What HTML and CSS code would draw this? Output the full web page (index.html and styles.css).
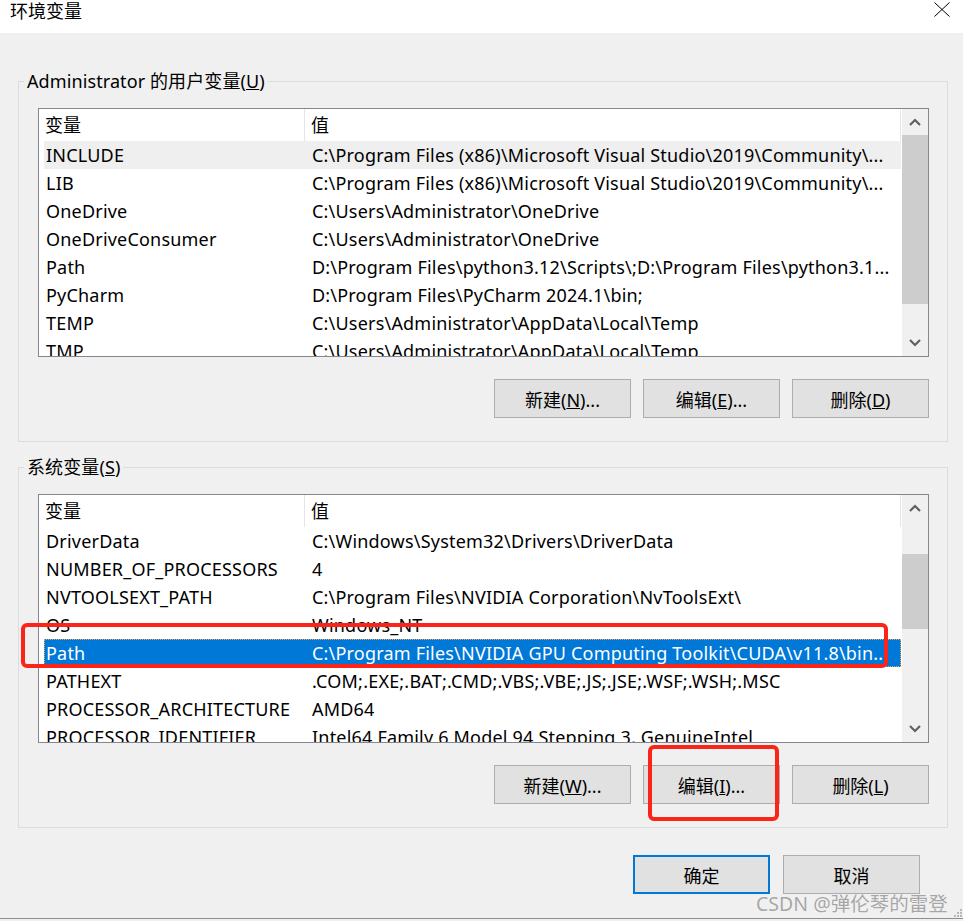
FILE: index.html
```html
<!DOCTYPE html>
<html lang="zh-CN">

<head>
    <meta charset="UTF-8">
    <meta name="viewport" content="width=device-width, initial-scale=1.0">
    <title>环境变量</title>
    <link rel="stylesheet" href="styles.css">
</head>

<body>
    <div class="window">
        <!-- 标题栏 -->
        <div class="title_bar">
            <span class="title_text">环境变量</span>
            <svg class="close_icon" width="16" height="15" viewBox="0 0 16 15">
                <path d="M0.5 0.5 L15.5 14.5 M15.5 0.5 L0.5 14.5" stroke="#000" stroke-width="1" fill="none" />
            </svg>
        </div>

        <div class="dialog_body">
            <!-- 用户变量 -->
            <div class="group">
                <div class="group_label">Administrator 的用户变量(<u>U</u>)</div>
                <div class="list_box">
                    <div class="list_main">
                        <div class="list_head">
                            <div class="head_name">变量</div>
                            <div class="head_value">值</div>
                        </div>
                        <div class="list_row hover">
                            <div class="col_name">INCLUDE</div>
                            <div class="col_value">C:\Program Files (x86)\Microsoft Visual Studio\2019\Community\...</div>
                        </div>
                        <div class="list_row">
                            <div class="col_name">LIB</div>
                            <div class="col_value">C:\Program Files (x86)\Microsoft Visual Studio\2019\Community\...</div>
                        </div>
                        <div class="list_row">
                            <div class="col_name">OneDrive</div>
                            <div class="col_value">C:\Users\Administrator\OneDrive</div>
                        </div>
                        <div class="list_row">
                            <div class="col_name">OneDriveConsumer</div>
                            <div class="col_value">C:\Users\Administrator\OneDrive</div>
                        </div>
                        <div class="list_row">
                            <div class="col_name">Path</div>
                            <div class="col_value">D:\Program Files\python3.12\Scripts\;D:\Program Files\python3.1...</div>
                        </div>
                        <div class="list_row">
                            <div class="col_name">PyCharm</div>
                            <div class="col_value">D:\Program Files\PyCharm 2024.1\bin;</div>
                        </div>
                        <div class="list_row">
                            <div class="col_name">TEMP</div>
                            <div class="col_value">C:\Users\Administrator\AppData\Local\Temp</div>
                        </div>
                        <div class="list_row">
                            <div class="col_name">TMP</div>
                            <div class="col_value">C:\Users\Administrator\AppData\Local\Temp</div>
                        </div>
                    </div>
                    <div class="scroll_bar">
                        <div class="scroll_btn">
                            <svg width="12" height="8" viewBox="0 0 12 8"><path d="M1 7 L6 2 L11 7" stroke="#606060" stroke-width="2.2" fill="none" /></svg>
                        </div>
                        <div class="scroll_track">
                            <div class="scroll_thumb" style="margin-top: 0; height: 169px;"></div>
                        </div>
                        <div class="scroll_btn">
                            <svg width="12" height="8" viewBox="0 0 12 8"><path d="M1 1 L6 6 L11 1" stroke="#606060" stroke-width="2.2" fill="none" /></svg>
                        </div>
                    </div>
                </div>
                <div class="btn_row">
                    <button class="win_btn">新建(<u>N</u>)...</button>
                    <button class="win_btn">编辑(<u>E</u>)...</button>
                    <button class="win_btn">删除(<u>D</u>)</button>
                </div>
            </div>

            <!-- 系统变量 -->
            <div class="group group_sys">
                <div class="group_label">系统变量(<u>S</u>)</div>
                <div class="list_box">
                    <div class="list_main">
                        <div class="list_head">
                            <div class="head_name">变量</div>
                            <div class="head_value">值</div>
                        </div>
                        <div class="list_row">
                            <div class="col_name">DriverData</div>
                            <div class="col_value">C:\Windows\System32\Drivers\DriverData</div>
                        </div>
                        <div class="list_row">
                            <div class="col_name">NUMBER_OF_PROCESSORS</div>
                            <div class="col_value">4</div>
                        </div>
                        <div class="list_row">
                            <div class="col_name">NVTOOLSEXT_PATH</div>
                            <div class="col_value">C:\Program Files\NVIDIA Corporation\NvToolsExt\</div>
                        </div>
                        <div class="list_row">
                            <div class="col_name">OS</div>
                            <div class="col_value">Windows_NT</div>
                        </div>
                        <div class="list_row selected">
                            <div class="col_name">Path</div>
                            <div class="col_value">C:\Program Files\NVIDIA GPU Computing Toolkit\CUDA\v11.8\bin...</div>
                        </div>
                        <div class="list_row">
                            <div class="col_name">PATHEXT</div>
                            <div class="col_value">.COM;.EXE;.BAT;.CMD;.VBS;.VBE;.JS;.JSE;.WSF;.WSH;.MSC</div>
                        </div>
                        <div class="list_row">
                            <div class="col_name">PROCESSOR_ARCHITECTURE</div>
                            <div class="col_value">AMD64</div>
                        </div>
                        <div class="list_row">
                            <div class="col_name">PROCESSOR_IDENTIFIER</div>
                            <div class="col_value">Intel64 Family 6 Model 94 Stepping 3, GenuineIntel</div>
                        </div>
                    </div>
                    <div class="scroll_bar">
                        <div class="scroll_btn">
                            <svg width="12" height="8" viewBox="0 0 12 8"><path d="M1 7 L6 2 L11 7" stroke="#606060" stroke-width="2.2" fill="none" /></svg>
                        </div>
                        <div class="scroll_track">
                            <div class="scroll_thumb" style="margin-top: 33px; height: 75px;"></div>
                        </div>
                        <div class="scroll_btn">
                            <svg width="12" height="8" viewBox="0 0 12 8"><path d="M1 1 L6 6 L11 1" stroke="#606060" stroke-width="2.2" fill="none" /></svg>
                        </div>
                    </div>
                </div>
                <div class="btn_row">
                    <button class="win_btn">新建(<u>W</u>)...</button>
                    <button class="win_btn">编辑(<u>I</u>)...</button>
                    <button class="win_btn">删除(<u>L</u>)</button>
                </div>
            </div>

            <!-- 确定 / 取消 -->
            <div class="dialog_btns">
                <button class="win_btn default_btn">确定</button>
                <button class="win_btn">取消</button>
            </div>
        </div>

        <!-- 红色标注框 -->
        <div class="mark_box mark_path"></div>
        <div class="mark_box mark_edit"></div>

        <div class="watermark">CSDN @弹伦琴的雷登</div>
        <svg class="grip" width="8" height="8" viewBox="0 0 8 8">
            <rect x="6" y="0" width="2" height="2" fill="#b8b8b8" />
            <rect x="3" y="3" width="2" height="2" fill="#b8b8b8" />
            <rect x="6" y="3" width="2" height="2" fill="#b8b8b8" />
            <rect x="0" y="6" width="2" height="2" fill="#b8b8b8" />
            <rect x="3" y="6" width="2" height="2" fill="#b8b8b8" />
            <rect x="6" y="6" width="2" height="2" fill="#b8b8b8" />
        </svg>
    </div>
</body>

</html>
```

FILE: styles.css
```css
/* 기본 */
body {
    margin: 0;
    background-color: #f0f0f0;
    font-family: "Noto Sans", "Noto Sans CJK SC", sans-serif;
    font-size: 18px;
    color: #000;
}

.window {
    position: relative;
    width: 963px;
    height: 918px;
    border-bottom: 1px solid #8f8f8f;
    overflow: hidden;
}

/* 标题栏 */
.title_bar {
    height: 33px;
    background-color: #fff;

    display: flex;
    align-items: center;
    justify-content: space-between;
    padding: 0 13px 0 10px;
}

.title_text {
    line-height: 22px;
    margin-top: -12px;
}

.close_icon {
    margin-top: -14px;
}

.dialog_body {
    padding-left: 18px;
}

/* 分组框 */
.group {
    width: 930px;
    box-sizing: border-box;
    margin-top: 48px;
    padding: 0 18px 23px 19px;

    border: 1px solid #dcdcdc;
}

.group_sys {
    margin-top: 25px;
}

.group_label {
    width: fit-content;
    margin-top: -13px;
    margin-left: -14px;
    padding: 0 3px;

    line-height: 24px;
    letter-spacing: 0.1px;
    background-color: #f0f0f0;
}

/* 列表 */
.list_box {
    display: flex;
    height: 249px;
    margin-top: 15px;
    box-sizing: border-box;

    border: 1px solid #828790;
    background-color: #fff;
    overflow: hidden;
}

.list_main {
    flex: 1;
    overflow: hidden;
}

.list_head {
    display: flex;
    height: 32px;
    margin-left: 5px;
    margin-right: 1px;
    border-right: 1px solid #e5e5e5;
    line-height: 32px;
}

.head_name {
    width: 259px;
    padding-left: 1px;
    border-right: 1px solid #e5e5e5;
}

.head_value {
    padding-left: 6px;
}

.list_row {
    display: flex;
    height: 28px;
    margin-left: 5px;
    margin-right: 1px;
    padding-left: 2px;

    line-height: 28px;
    white-space: nowrap;
    letter-spacing: 0.2px;
}

.list_row.hover {
    background-color: #efefef;
}

.list_row.selected {
    background-color: #0078d7;
    color: #fff;
    outline: 1px dotted #f0a848;
    outline-offset: -1px;
}

.col_name {
    width: 266px;
    flex-shrink: 0;
}

/* 滚动条 */
.scroll_bar {
    display: flex;
    flex-direction: column;
    width: 26px;
    background-color: #f0f0f0;
}

.scroll_btn {
    height: 26px;

    display: flex;
    align-items: center;
    justify-content: center;
}

.scroll_track {
    flex: 1;
}

.scroll_thumb {
    background-color: #cdcdcd;
}

/* 按钮 */
.btn_row {
    display: flex;
    justify-content: flex-end;
    gap: 12px;
    margin-top: 22px;
}

.win_btn {
    width: 137px;
    height: 39px;
    box-sizing: border-box;

    border: 1px solid #adadad;
    background-color: #e1e1e1;
    font-family: inherit;
    font-size: 18px;
    color: #000;
    padding: 0;
}

.default_btn {
    border: 2px solid #0078d7;
}

.dialog_btns {
    display: flex;
    justify-content: flex-end;
    gap: 13px;
    width: 902px;
    margin-top: 27px;
}

/* 红色标注 */
.mark_box {
    position: absolute;
    border: 4px solid #fa2418;
    border-radius: 6px;
    box-sizing: border-box;
}

.mark_path {
    left: 21px;
    top: 623px;
    width: 867px;
    height: 45px;
}

.mark_edit {
    left: 648px;
    top: 745px;
    width: 131px;
    height: 76px;
}

.watermark {
    position: absolute;
    left: 756px;
    top: 888px;

    font-size: 19.5px;
    color: #a6a6a6;
    text-shadow: 0 0 1px #fff;
    white-space: nowrap;
}

.grip {
    position: absolute;
    right: 1px;
    bottom: 1px;
}
```
